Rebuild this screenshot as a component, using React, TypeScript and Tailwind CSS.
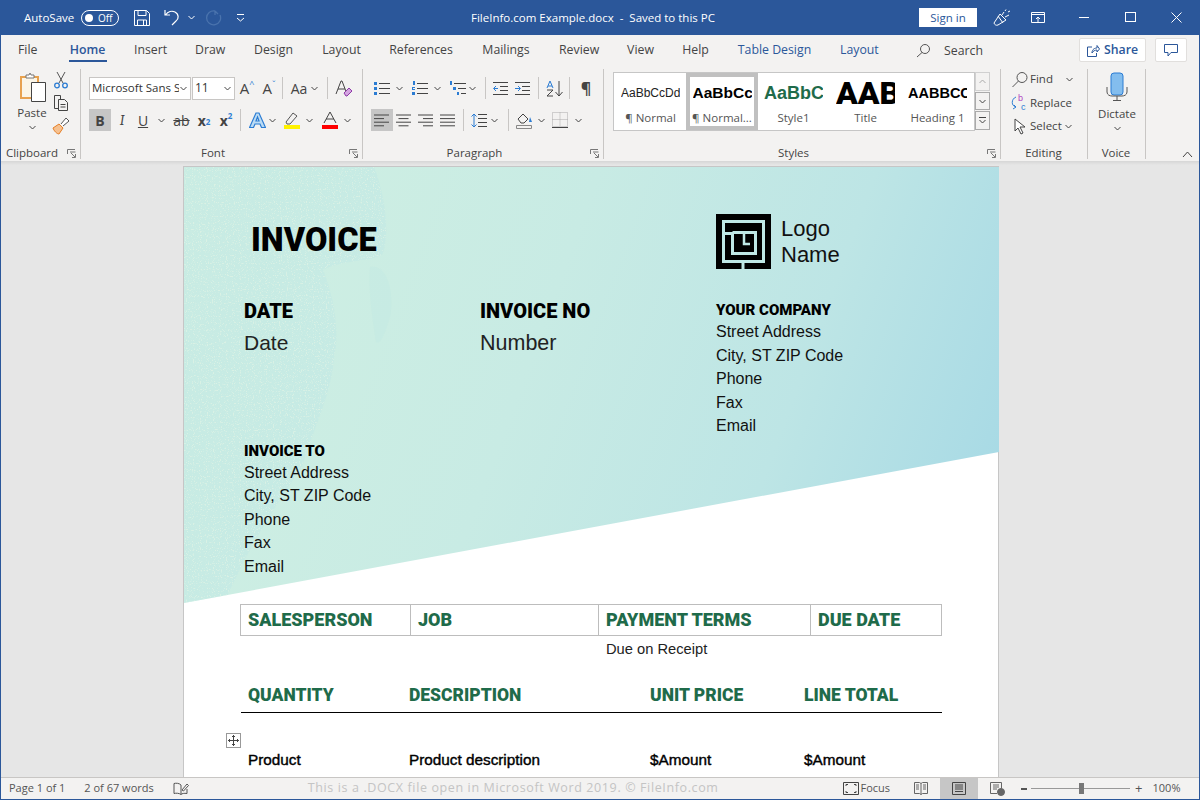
import type { ReactNode } from 'react';

const UI = 'font-["Open_Sans","Noto_Sans",sans-serif]';
const DOC = 'font-["Liberation_Sans",Arial,sans-serif]';
const HEAVY = 'font-["Roboto","Liberation_Sans",sans-serif] font-black';

const tabs = [
  { label: 'File', cls: 'w-[18px]' },
  { label: 'Home', cls: 'ml-[5px] w-[37px] text-[#2b579a] font-semibold' },
  { label: 'Insert', cls: 'w-[33px]' },
  { label: 'Draw', cls: 'w-[30px]' },
  { label: 'Design', cls: 'w-[41px]' },
  { label: 'Layout', cls: 'w-[39px]' },
  { label: 'References', cls: 'w-[64px]' },
  { label: 'Mailings', cls: 'w-[50px]' },
  { label: 'Review', cls: 'w-[40px]' },
  { label: 'View', cls: 'w-[27px]' },
  { label: 'Help', cls: 'w-[27px]' },
  { label: 'Table Design', cls: 'w-[75px] text-[#2b579a]' },
  { label: 'Layout', cls: 'w-[38px] text-[#2b579a]' },
];

const gallery = [
  { cls: 'w-[71px] text-[12px] text-[#222] font-["Liberation_Sans"]', sample: 'AaBbCcDd', name: '¶ Normal', on: false },
  { cls: 'w-[72px] text-[15.5px] text-black font-["Liberation_Sans"] font-bold', sample: 'AaBbCc', name: '¶ Normal...', on: true },
  { cls: 'w-[71px] text-[18px] text-[#1f6b4a] font-["Liberation_Sans"] font-bold', sample: 'AaBbCc', name: 'Style1', on: false },
  { cls: 'w-[73px] text-[32px] text-black font-["Roboto"] font-black', sample: 'AAB', name: 'Title', on: false },
  { cls: 'w-[71px] text-[14.5px] text-black font-["Liberation_Sans"] font-bold', sample: 'AABBCC', name: 'Heading 1', on: false },
];

const Chev = ({ c = '#444' }: { c?: string }) => (
  <svg width="7" height="5" viewBox="0 0 7 5" className="shrink-0"><path d="M.5 1 3.500 4l3-3" fill="none" stroke={c} /></svg>
);

const Cell = ({ className = 'w-[22px]', children }: { className?: string; children?: ReactNode }) => (
  <div className={`h-[22px] flex items-center justify-center shrink-0 ${className}`}>{children}</div>
);

const Sep = ({ className = '' }: { className?: string }) => <div className={`w-px h-[22px] bg-[#c8c6c4] shrink-0 ${className}`} />;

const Launcher = () => (
  <svg width="9" height="9" viewBox="0 0 9 9" className="absolute right-[5px] top-[84px]">
    <path d="M.5 5V.500H8M3 3h5.500M4 4l4 4M8.500 5v3.500H5" fill="none" stroke="#777" />
  </svg>
);

const Group = ({ label, className, children, launcher = true }: { label: string; className: string; children: ReactNode; launcher?: boolean }) => (
  <div className={`relative h-[96px] shrink-0 ${className}`}>
    {children}
    <div className={`absolute left-0 right-0 top-[80px] text-center text-[11.5px] leading-[16px] text-[#444] ${launcher ? 'pr-[18px]' : 'pr-[2px]'}`}>{label}</div>
    {launcher && <Launcher />}
    <div className="absolute right-0 top-[4px] bottom-[2px] w-px bg-[#c8c6c4]" />
  </div>
);

const Lines = ({ x = 0, w = 14, ys, c = '#444' }: { x?: number; w?: number; ys: number[]; c?: string }) => (
  <>{ys.map((y) => <path key={y} d={`M${x} ${y}.5h${w}`} stroke={c} />)}</>
);

const Align = ({ kind }: { kind: 'l' | 'c' | 'r' | 'j' }) => {
  const rows = [15, 10, 15, 10];
  return (
    <svg width="16" height="13" viewBox="0 0 16 13">
      {rows.map((w, i) => {
        const width = kind === 'j' ? 15 : w;
        const x = kind === 'l' || kind === 'j' ? 0 : kind === 'c' ? (15 - width) / 2 : 15 - width;
        return <path key={i} d={`M${x} ${1 + i * 3.6}h${width}`} stroke="#444" />;
      })}
    </svg>
  );
};

const Maze = () => (
  <svg width="55" height="55" viewBox="0 0 55 55" className="shrink-0">
    <rect width="55" height="55" fill="#000" />
    <g fill="none" stroke="#bfe8e6" strokeWidth="3">
      <path d="M27 47.500H7.500V7.500h40v40H27V55" />
      <path d="M7.500 19.500H16.500V39.500H39.500V18.500H16.500" />
      <path d="M28 19v11h6" strokeWidth="2.500" />
    </g>
  </svg>
);

const silhouette = 'M0 0H190C202 30 206 70 198 88 180 96 160 92 139 103 150 130 156 165 150 190 148 225 130 260 118 300 90 340 65 380 40 436H0Z';
const oval = 'M186 100C205 96 210 130 206 150 200 170 196 178 192 175 188 150 184 120 186 100Z';

const PageArt = () => (
  <svg className="absolute left-0 top-0" width="815" height="437" viewBox="0 0 815 437">
    <defs>
      <linearGradient id="wash" x1="0" y1="0" x2="815" y2="300" gradientUnits="userSpaceOnUse">
        <stop offset="0" stopColor="#d0f0e2" />
        <stop offset="0.45" stopColor="#c8ebe4" />
        <stop offset="0.75" stopColor="#bde5e5" />
        <stop offset="1" stopColor="#a8dae5" />
      </linearGradient>
      <filter id="grain" x="0" y="0" width="100%" height="100%">
        <feTurbulence type="fractalNoise" baseFrequency="0.85" numOctaves="1" seed="4" />
        <feColorMatrix values="0 0 0 0 0.9  0 0 0 0 0.96  0 0 0 0 0.8  0 0 0 7 -3.9" />
        <feComposite in2="SourceGraphic" operator="in" />
      </filter>
      <clipPath id="wedge"><path d="M0 0H815V285L0 436Z" /></clipPath>
    </defs>
    <path d="M0 0H815V285L0 436Z" fill="url(#wash)" />
    <g clipPath="url(#wedge)">
      <path d={silhouette} fill="#bde6e5" opacity="0.4" />
      <path d={oval} fill="#bde6e5" opacity="0.25" />
      <g opacity="0.4">
        <path d={silhouette} fill="#000" filter="url(#grain)" />
      </g>
    </g>
  </svg>
);

export default function App() {
  return (
    <div className={`${UI} w-[1200px] h-[800px] overflow-hidden flex flex-col bg-[#2b579a] text-[#444]`}>
      {/* title bar */}
      <div className="relative h-[35px] shrink-0 flex items-center text-white text-[11.5px]">
        <span className="ml-[24px] w-[50px]">AutoSave</span>
        <div className="ml-[7px] w-[38px] h-[16px] rounded-full border border-white flex items-center pl-[3px] gap-[5px]">
          <div className="w-[8px] h-[8px] rounded-full bg-white" />
          <span className="text-[10px] leading-none">Off</span>
        </div>
        <svg className="ml-[15px]" width="16" height="16" viewBox="0 0 16 16" fill="none" stroke="#fff">
          <path d="M.5.500h12l3 3v12H.5zM4 .500v5h8v-5M3.500 15.500V10h9v5.500M9.500 10v5" />
        </svg>
        <svg className="ml-[14px]" width="17" height="17" viewBox="0 0 17 17" fill="none" stroke="#fff" strokeWidth="1.2">
          <path d="M1 1v5h5M1.500 6C4 2.500 8 1.500 11 3c4 2 4 7 1 9l-4 4" />
        </svg>
        <div className="ml-[7px]"><Chev c="#fff" /></div>
        <svg className="ml-[9px]" width="18" height="18" viewBox="0 0 18 18" fill="none" stroke="#4a73ad" strokeWidth="1.3">
          <path d="M11 2a7 7 0 1 0 5 4M11 2l3 3M11 2v4" />
        </svg>
        <svg className="ml-[14px]" width="9" height="8" viewBox="0 0 9 8" fill="none" stroke="#fff">
          <path d="M1 .500h7M1 4l3.500 3L8 4" />
        </svg>
        <span className="absolute left-[471px] top-[9px] leading-[17px] whitespace-pre">FileInfo.com Example.docx  -  Saved to this PC</span>
        <div className="absolute left-[919px] top-[8px] w-[58px] h-[19px] bg-white text-[#2b579a] text-[11.5px] text-center leading-[19px]">Sign in</div>
        <svg className="absolute left-[993px] top-[9px]" width="18" height="18" viewBox="0 0 18 18" fill="none" stroke="#fff">
          <path d="M1 14 7 5l6 6-8 5c-2 1-4-1-4-2ZM5 7l5 7M9 6l2-3M12 8l4-2M12 2l1-1.500M15 3l2-1" />
        </svg>
        <svg className="absolute left-[1031px] top-[11px]" width="14" height="13" viewBox="0 0 14 13" fill="none" stroke="#fff">
          <path d="M.5 1.500h13v10H.5zM.5 3.500h13M7 11V6M5 8l2-2 2 2" />
        </svg>
        <div className="absolute left-[1079px] top-[17px] w-[10px] h-px bg-white" />
        <div className="absolute left-[1125px] top-[12px] w-[11px] h-[10px] border border-white" />
        <svg className="absolute left-[1171px] top-[12px]" width="11" height="11" viewBox="0 0 11 11" stroke="#fff"><path d="M.5.500l10 10M10.500.500l-10 10" /></svg>
      </div>

      <div className="flex-1 min-h-0 mx-px mb-px flex flex-col bg-[#f3f2f1]">
        {/* tab row */}
        <div className="relative h-[30px] shrink-0 flex items-center pl-[17px] gap-[28px] text-[12.3px]">
          {tabs.map((t, i) => (
            <span key={i} className={`shrink-0 text-center whitespace-nowrap ${t.cls}`}>{t.label}</span>
          ))}
          <div className="absolute left-[68px] top-[25px] w-[38px] h-[2px] bg-[#2b579a]" />
          <svg className="absolute left-[915px] top-[8px]" width="15" height="15" viewBox="0 0 15 15" fill="none" stroke="#555"><circle cx="9" cy="6" r="4.500" /><path d="M6 9.500 1 14" /></svg>
          <span className="absolute left-[943px] top-[7px] leading-[17px]">Search</span>
          <div className="absolute left-[1078px] top-[3px] w-[67px] h-[24px] bg-white border border-[#e1dfdd] rounded-[2px] flex items-center justify-center gap-[4px] text-[#2b579a] font-semibold">
            <svg width="13" height="13" viewBox="0 0 13 13" fill="none" stroke="#2b579a"><path d="M5 3H.5v9.500h9V9M5 9c0-4 3-5 5-5V1.500L12.500 5 10 8V6c-2 0-4 1-5 3Z" /></svg>
            Share
          </div>
          <div className="absolute left-[1154px] top-[3px] w-[32px] h-[24px] bg-white border border-[#e1dfdd] rounded-[2px] flex items-center justify-center">
            <svg width="14" height="13" viewBox="0 0 14 13" fill="none" stroke="#2b579a"><path d="M.5.500h13v8H7L4 12V8.500H.5z" /></svg>
          </div>
        </div>

        {/* ribbon */}
        <div className="h-[96px] shrink-0 flex">
          <Group label="Clipboard" className="w-[80px]">
            <div className="absolute left-[15px] top-[7px] flex flex-col items-center w-[32px]">
              <svg width="32" height="30" viewBox="0 0 32 30">
                <path d="M5 5h17v21H5z" fill="#fbf5e6" stroke="#e8a24f" strokeWidth="2" />
                <path d="M10 5V3h3l1-2 1 2h3v3h-8z" fill="#fff" stroke="#777" />
                <path d="M15.500 10.500h14v19h-14z" fill="#fff" stroke="#444" />
              </svg>
              <span className="text-[11.5px] leading-[16px] mt-[3px]">Paste</span>
              <div className="mt-[4px]"><Chev /></div>
            </div>
            <div className="absolute left-[51px] top-[6px] flex flex-col gap-[5px]">
              <svg width="18" height="18" viewBox="0 0 18 18" fill="none"><path d="M5 1l6 11M13 1 7 12" stroke="#555" /><circle cx="5" cy="14.500" r="2.300" stroke="#2b7cd3" strokeWidth="1.300" /><circle cx="13" cy="14.500" r="2.300" stroke="#2b7cd3" strokeWidth="1.300" /></svg>
              <svg width="18" height="18" viewBox="0 0 18 18" fill="#f3f2f1" stroke="#444"><path d="M2.500 1.500h6v13h-6z" /><path d="M6.500 5.500h6l3 3v8h-9z" /><path d="M8.500 10.500h5M8.500 13h5" /></svg>
              <svg width="18" height="18" viewBox="0 0 18 18" fill="none"><path d="M1 11l6-4 4 4-4 6c-2 0-5-3-6-6Z" fill="#f6c190" stroke="#e57e25" /><path d="M9 7l5-6 3 3-6 5" stroke="#555" fill="#fff" /></svg>
            </div>
          </Group>

          <Group label="Font" className="w-[282px]">
            <div className="pl-[8px] pt-[12px] flex items-center h-[34px]">
              <div className="w-[102px] h-[23px] bg-white border border-[#c8c6c4] flex items-center justify-between pl-[2px] pr-[3px] text-[11.5px] text-[#333]">
                <span className="w-[87px] overflow-hidden whitespace-nowrap">Microsoft Sans Serif</span><Chev />
              </div>
              <div className="ml-px w-[43px] h-[23px] bg-white border border-[#c8c6c4] flex items-center justify-between pl-[2px] pr-[3px] text-[12px] text-[#333]">
                <span>11</span><Chev />
              </div>
              <Cell className="ml-px w-[22px] text-[15px]">A<span className="text-[#2b7cd3] text-[9px] mb-[8px]">^</span></Cell>
              <Cell className="w-[22px] text-[15px]">A<span className="text-[#2b7cd3] text-[9px] mb-[6px]">ˇ</span></Cell>
              <Sep className="ml-[2px]" />
              <Cell className="ml-[6px] w-[20px] text-[14px]">Aa</Cell>
              <div className="ml-[2px]"><Chev /></div>
              <Sep className="ml-[9px]" />
              <svg className="ml-[7px]" width="18" height="18" viewBox="0 0 18 18" fill="none"><path d="M1 15 6 2h1l5 13M3 10h7" stroke="#444" /><path d="M9 14l5-5 3 3-5 5h-1z" fill="#d4a5e0" stroke="#8e3aa8" /></svg>
            </div>
            <div className="pl-[8px] mt-[10px] flex items-center h-[22px] text-[14px]">
              <Cell className="w-[22px] bg-[#c6c6c6] font-bold">B</Cell>
              <Cell className="w-[22px] italic font-serif">I</Cell>
              <Cell className="w-[20px] underline">U</Cell>
              <Cell className="w-[17px]"><Chev /></Cell>
              <Cell className="w-[23px] line-through">ab</Cell>
              <Cell className="w-[22px] font-bold">x<sub className="text-[#2b7cd3] text-[8px]">2</sub></Cell>
              <Cell className="w-[22px] font-bold">x<sup className="text-[#2b7cd3] text-[8px]">2</sup></Cell>
              <Sep className="ml-[3px]" />
              <Cell className="ml-[5px] w-[22px]">
                <svg width="17" height="17" viewBox="0 0 17 17"><path d="M.5 15.500 7 1h3l6.500 14.500h-4L11 12H6l-1.500 3.500zM7 9h3L8.500 5z" fill="#bcdcf4" stroke="#2b7cd3" strokeWidth="1.200" /></svg>
              </Cell>
              <Cell className="w-[9px]"><Chev /></Cell>
              <Cell className="ml-[5px] w-[20px]">
                <svg width="16" height="18" viewBox="0 0 16 18" fill="none"><path d="M2 11 9 2l4 3-7 8H3z" stroke="#555" /><path d="M0 14h16v4H0z" fill="#fff200" /></svg>
              </Cell>
              <Cell className="w-[15px]"><Chev /></Cell>
              <Cell className="ml-[2px] w-[22px]">
                <svg width="16" height="18" viewBox="0 0 16 18" fill="none"><path d="M2 12 8 1l6 11M4 8h8" stroke="#444" /><path d="M0 14h16v4H0z" fill="#f00" /></svg>
              </Cell>
              <Cell className="w-[13px]"><Chev /></Cell>
            </div>
          </Group>

          <Group label="Paragraph" className="w-[241px]">
            <div className="pl-[10px] pt-[12px] flex items-center h-[34px]">
              <Cell className="w-[17px]">
                <svg width="16" height="15" viewBox="0 0 16 15"><path d="M0 1h3v3H0zM0 6h3v3H0zM0 11h3v3H0z" fill="#2b7cd3" /><Lines x={5} w={11} ys={[2, 7, 12]} /></svg>
              </Cell>
              <Cell className="w-[18px]"><Chev /></Cell>
              <Cell className="ml-[3px] w-[17px]">
                <svg width="16" height="15" viewBox="0 0 16 15"><path d="M1 0h2v4H1zM0 6h3v1H1v1h2v1H0zM0 11h3v3H0z" fill="#2b7cd3" /><Lines x={5} w={11} ys={[2, 7, 12]} /></svg>
              </Cell>
              <Cell className="w-[18px]"><Chev /></Cell>
              <Cell className="ml-[3px] w-[17px]">
                <svg width="16" height="15" viewBox="0 0 16 15"><path d="M0 0h2v4H0zM3 6h3v3H3zM7 11h2v3H7z" fill="#2b7cd3" /><Lines x={4} w={12} ys={[2]} /><Lines x={8} w={8} ys={[7]} /><Lines x={11} w={5} ys={[12]} /></svg>
              </Cell>
              <Cell className="w-[12px]"><Chev /></Cell>
              <Sep className="ml-[7px]" />
              <Cell className="ml-[3px] w-[22px]">
                <svg width="15" height="13" viewBox="0 0 15 13"><Lines w={15} ys={[0, 12]} /><Lines x={7} w={8} ys={[4, 8]} /><path d="M5 6.500H1M3 4 .5 6.500 3 9" fill="none" stroke="#2b7cd3" /></svg>
              </Cell>
              <Cell className="w-[22px]">
                <svg width="15" height="13" viewBox="0 0 15 13"><Lines w={15} ys={[0, 12]} /><Lines x={7} w={8} ys={[4, 8]} /><path d="M0 6.500h5M3 4l2.500 2.500L3 9" fill="none" stroke="#2b7cd3" /></svg>
              </Cell>
              <Sep className="ml-[5px]" />
              <Cell className="ml-[5px] w-[20px]">
                <svg width="17" height="17" viewBox="0 0 17 17" fill="none"><path d="M1 8 4 1l3 7M2 6h4" stroke="#2b7cd3" /><path d="M1 10h6l-6 6h6" stroke="#444" /><path d="M13 1v15M9.500 12l3.500 4 3.500-4" stroke="#444" /></svg>
              </Cell>
              <Sep className="ml-[5px]" />
              <Cell className="ml-[5px] w-[22px] text-[16px] font-bold">¶</Cell>
            </div>
            <div className="pl-[8px] mt-[10px] flex items-center h-[22px]">
              <Cell className="w-[22px] bg-[#c6c6c6]"><Align kind="l" /></Cell>
              <Cell><Align kind="c" /></Cell>
              <Cell><Align kind="r" /></Cell>
              <Cell><Align kind="j" /></Cell>
              <Sep className="ml-[4px]" />
              <Cell className="ml-[5px] w-[20px]">
                <svg width="16" height="15" viewBox="0 0 16 15" fill="none"><path d="M3 1v13M.5 3.500 3 1l2.500 2.500M.5 11.500 3 14l2.500-2.500" stroke="#2b7cd3" /><Lines x={7} w={9} ys={[1, 5, 9, 13]} /></svg>
              </Cell>
              <Cell className="w-[10px]"><Chev /></Cell>
              <Sep className="ml-[9px]" />
              <Cell className="ml-[4px] w-[22px]">
                <svg width="17" height="17" viewBox="0 0 17 17" fill="none"><path d="M2 7l5-5 5 5-4 4H5z" stroke="#444" /><path d="M14 5l2 5h-3z" fill="#2b7cd3" /><path d="M.5 13.500h15v3H.5z" stroke="#888" /></svg>
              </Cell>
              <Cell className="w-[12px]"><Chev /></Cell>
              <Cell className="ml-[3px] w-[20px]">
                <svg width="16" height="16" viewBox="0 0 16 16" fill="none"><path d="M.5.500h15v14H.5zM8 .500v14M.5 7.500h15" stroke="#aaa" strokeDasharray="1 1" /><path d="M0 15.500h16" stroke="#444" /></svg>
              </Cell>
              <Cell className="w-[16px]"><Chev /></Cell>
            </div>
          </Group>

          <Group label="Styles" className="w-[397px]">
            <div className="absolute left-[9px] top-[7px] w-[362px] h-[59px] bg-white border border-[#c6c6c6] flex overflow-hidden pl-[1px] pr-[3px]">
              {gallery.map((s) => (
                <div key={s.name} className={`relative shrink-0 flex flex-col items-center ${s.cls}`}>
                  {s.on && <div className="absolute inset-0 border-[4px] border-[#c0c0c0]" />}
                  <div className="h-[38px] pt-[2px] w-[59px] flex items-center overflow-hidden whitespace-nowrap leading-none">{s.sample}</div>
                  <div className={`${UI} text-[11.5px] font-normal leading-[14px] text-[#555]`}>{s.name}</div>
                </div>
              ))}
            </div>
            <div className="absolute left-[371px] top-[7px] w-[15px] h-[59px] flex flex-col gap-px">
              <div className="h-[19px] border border-[#d0d0d0] bg-[#f3f2f1] flex items-center justify-center rotate-180"><Chev c="#aaa" /></div>
              <div className="h-[18px] border border-[#aaa] flex items-center justify-center"><Chev /></div>
              <div className="h-[19px] border border-[#aaa] flex flex-col items-center justify-center gap-[1px]"><div className="w-[7px] h-px bg-[#444]" /><Chev /></div>
            </div>
          </Group>

          <Group label="Editing" className="w-[87px]" launcher={false}>
            <div className="pl-[10px] pt-[5px] flex flex-col gap-[5.5px] text-[11.5px]">
              <div className="h-[18px] flex items-center">
                <svg width="18" height="17" viewBox="0 0 18 17" fill="none" stroke="#555"><circle cx="11" cy="6.500" r="5" /><path d="M7.500 10 1.500 16" /></svg>
                <span className="ml-[1px] w-[36px]">Find</span><Chev />
              </div>
              <div className="h-[18px] flex items-center">
                <svg width="18" height="17" viewBox="0 0 18 17" fill="none"><path d="M5 3c-5 2-5 9 0 10M5 13l-2-2M5 13l-3 2" stroke="#2b7cd3" /><text x="7" y="7" fontSize="9" fill="#b146c2" fontFamily="Liberation Sans">b</text><text x="10" y="16" fontSize="9" fill="#2b7cd3" fontFamily="Liberation Sans">c</text></svg>
                <span className="ml-[1px]">Replace</span>
              </div>
              <div className="h-[18px] flex items-center">
                <svg width="18" height="17" viewBox="0 0 18 17" fill="#fff" stroke="#444"><path d="M4 1v12l3-3 3 6 2-1-3-6h5z" /></svg>
                <span className="ml-[1px] mr-[3px]">Select</span><Chev />
              </div>
            </div>
          </Group>

          <Group label="Voice" className="w-[58px]" launcher={false}>
            <div className="flex flex-col items-center pt-[7px]">
              <svg width="22" height="29" viewBox="0 0 22 29" fill="none">
                <rect x="5" y="1" width="12" height="22" rx="3" fill="#83bdee" stroke="#2b7cd3" />
                <path d="M1 15v5c0 3 3 4 5 4h10c2 0 5-1 5-4v-5M11 24v4M7 28.500h8" stroke="#555" />
              </svg>
              <span className="text-[11.5px] leading-[16px] mt-[5px]">Dictate</span>
              <div className="mt-[4px]"><Chev /></div>
            </div>
          </Group>

          <div className="relative flex-1">
            <svg className="absolute right-[6px] top-[86px]" width="11" height="7" viewBox="0 0 11 7" fill="none" stroke="#444"><path d="M1 6l4.500-5L10 6" /></svg>
          </div>
        </div>
        <div className="h-[4px] shrink-0 bg-gradient-to-b from-[#d6d6d6] to-[#e6e6e6]" />

        {/* document area */}
        <div className="flex-1 min-h-0 bg-[#e6e6e6] overflow-hidden pl-[182px]">
          <div className={`${DOC} relative w-[816px] h-[700px] mt-[1px] bg-white border-l border-t border-r border-[#c6c6c6] text-[#111]`}>
            <PageArt />
            <div className="relative pl-[60px]">
              <div className="pt-[47px] h-[102px] flex">
                <div className={`${HEAVY} w-[472px] pl-[7px] text-[32.5px] leading-[53px] text-black`}>INVOICE</div>
                <div className="flex items-center gap-[10px]">
                  <Maze />
                  <div className="text-[22px] leading-[26px]">Logo<br />Name</div>
                </div>
              </div>
              <div className="mt-[31px] flex">
                <div className="w-[236px] pt-[1px]">
                  <div className={`${HEAVY} text-[20px] leading-[20px] text-black`}>DATE</div>
                  <div className="text-[21px] leading-[26px] mt-[9px] text-[#222]">Date</div>
                </div>
                <div className="w-[236px] pt-[1px]">
                  <div className={`${HEAVY} text-[20px] leading-[20px] text-black`}>INVOICE NO</div>
                  <div className="text-[21.5px] leading-[26px] mt-[9px] text-[#222]">Number</div>
                </div>
                <div className="text-[16px] leading-[23.5px]">
                  <div className={`${HEAVY} text-[15px] leading-[20px] text-black`}>YOUR COMPANY</div>
                  <div>Street Address</div>
                  <div>City, ST ZIP Code</div>
                  <div>Phone</div>
                  <div>Fax</div>
                  <div>Email</div>
                </div>
              </div>
              <div className="mt-[3px] text-[16px] leading-[23.5px]">
                <div className={`${HEAVY} text-[15px] leading-[20px] text-black`}>INVOICE TO</div>
                <div>Street Address</div>
                <div>City, ST ZIP Code</div>
                <div>Phone</div>
                <div>Fax</div>
                <div>Email</div>
              </div>
            </div>

            <div className="relative ml-[56px] mt-[26px] w-[702px]">
              <div className={`${HEAVY} grid grid-cols-[169px_188px_212px_133px] border border-[#bdbdbd] h-[32px] text-[18px] leading-[30px] text-[#1f6b4a]`}>
                <div className="pl-[7px]">SALESPERSON</div>
                <div className="pl-[7px] border-l border-[#bdbdbd]">JOB</div>
                <div className="pl-[7px] border-l border-[#bdbdbd]">PAYMENT TERMS</div>
                <div className="pl-[7px] border-l border-[#bdbdbd]">DUE DATE</div>
              </div>
              <div className="grid grid-cols-[170px_188px_212px_132px] text-[14.7px] leading-[26px] text-[#222]">
                <div />
                <div />
                <div className="pl-[8px]">Due on Receipt</div>
                <div />
              </div>
              <div className={`${HEAVY} mt-[19px] ml-px grid grid-cols-[168px_241px_154px_138px] h-[32px] border-b border-black text-[17.5px] leading-[28px] text-[#1f6b4a]`}>
                <div className="pl-[7px]">QUANTITY</div>
                <div>DESCRIPTION</div>
                <div>UNIT PRICE</div>
                <div>LINE TOTAL</div>
              </div>
              <div className="mt-[36px] grid grid-cols-[169px_241px_154px_138px] text-[15.3px] leading-[22px] text-black [-webkit-text-stroke:0.4px_#000]">
                <div className="pl-[8px]">Product</div>
                <div>Product description</div>
                <div>$Amount</div>
                <div>$Amount</div>
              </div>
              <div className="absolute left-[-14px] top-[129px] w-[15px] h-[15px] border border-[#999] bg-white flex items-center justify-center">
                <svg width="11" height="11" viewBox="0 0 11 11" fill="none" stroke="#444"><path d="M5.500 0v11M0 5.500h11M4 1.500h3M4 9.500h3M1.500 4v3M9.500 4v3" /></svg>
              </div>
            </div>
          </div>
        </div>

        {/* status bar */}
        <div className="relative h-[22px] shrink-0 bg-[#f3f2f1] border-t border-[#c8c6c4] flex items-center text-[11px] text-[#555]">
          <span className="ml-[8px]">Page 1 of 1</span>
          <span className="ml-[19px]">2 of 67 words</span>
          <svg className="ml-[19px]" width="16" height="14" viewBox="0 0 16 14" fill="none" stroke="#555"><path d="M8 3C6 1 3 1 1 1.500v10c2-.5 5-.5 7 1 1-1 3-1.500 6-1V7M8 3v9.500M9 8l5-6 1.500 1.500L10.500 9z" /></svg>
          <span className="ml-[119px] text-[12.5px] tracking-[0.62px] text-[#c4c4c4] whitespace-nowrap">This is a .DOCX file open in Microsoft Word 2019. © FileInfo.com</span>
          <svg className="ml-[124px]" width="16" height="13" viewBox="0 0 16 13" fill="none" stroke="#444"><path d="M.5.500h15v12H.5zM3 4V2.500h2M11 2.500h2V4M3 9v1.500h2M11 10.500h2V9" /></svg>
          <span className="ml-[2px]">Focus</span>
          <svg className="ml-[24px]" width="14" height="13" viewBox="0 0 14 13" fill="none" stroke="#666"><path d="M.5.500h5L7 1.500 8.500.500h5v11h-5L7 12.500l-1.500-1h-5zM7 1.500v11M2 3h3M2 5h3M2 7h3M9 3h3M9 5h3M9 7h3" /></svg>
          <div className="ml-[12px] w-[38px] h-[21px] bg-[#c6c6c6] flex items-center justify-center">
            <svg width="14" height="13" viewBox="0 0 14 13" fill="none" stroke="#444"><path d="M.5.500h13v12H.5zM3 3h8M3 5h8M3 7h8M3 9.500h8" /></svg>
          </div>
          <svg className="ml-[12px]" width="15" height="14" viewBox="0 0 15 14" fill="none" stroke="#666"><path d="M.5.500h11v6M7 11.500H.5v-11M3 3h6M3 5h6M3 7h4" /><circle cx="11" cy="10" r="3.500" fill="#666" /></svg>
          <div className="ml-[16px] w-[6px] h-[2px] bg-[#555]" />
          <div className="relative ml-[4px] w-[99px] h-px bg-[#999]">
            <div className="absolute left-[48px] top-[-5px] w-[5px] h-[11px] bg-[#777]" />
          </div>
          <span className="ml-[5px] text-[13px] leading-none">+</span>
          <span className="ml-[10px]">100%</span>
        </div>
      </div>
    </div>
  );
}
